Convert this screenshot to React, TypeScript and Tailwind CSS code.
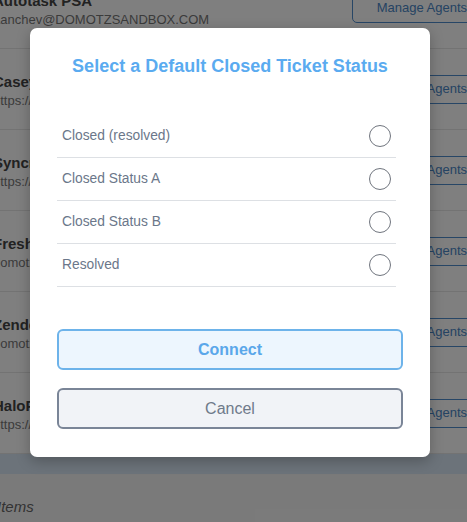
import React from 'react';

interface Integration {
  name: string;
  detail: string;
}

const integrations: Integration[] = [
  { name: 'Autotask PSA', detail: 'aanchev@DOMOTZSANDBOX.COM' },
  { name: 'Casey', detail: 'https://casey.example.com' },
  { name: 'Syncro', detail: 'https://domotz.syncromsp.com' },
  { name: 'Freshservice', detail: 'domotz.freshservice.com' },
  { name: 'Zendesk', detail: 'domotz.zendesk.com' },
  { name: 'HaloPSA', detail: 'https://domotz.halopsa.com' },
];

const statuses = ['Closed (resolved)', 'Closed Status A', 'Closed Status B', 'Resolved'];

const font = { fontFamily: '"Liberation Sans", Arial, sans-serif' };

export default function App() {
  return (
    <div className="relative h-[522px] w-[467px] overflow-hidden bg-white" style={font}>
      {/* Page behind the dialog */}
      <div className="-mt-[32px]">
        {integrations.map((item) => (
          <div
            key={item.name}
            className="flex h-[81px] items-center justify-between border-b border-[#e6e6e6]"
          >
            <div className="-ml-[7px] mt-[3px] flex flex-col gap-[2px]">
              <div className="text-[15px] font-bold leading-[18px] text-[#444]">{item.name}</div>
              <div className="text-[13px] leading-[16px] text-[#777]">{item.detail}</div>
            </div>
            <button className="-mr-[25px] h-[29px] rounded-[5px] border border-[#4f8ccc] px-[24px] text-[13px] text-[#4a86c6]">
              Manage Agents
            </button>
          </div>
        ))}
        <div className="h-[20px] bg-[#d8e6f4]" />
        <div className="h-[100px] bg-[#f5f5f5] pt-[22px]">
          <div className="-ml-[3px] text-[15px] italic text-[#666]">Items</div>
        </div>
      </div>

      {/* Dim overlay + dialog */}
      <div className="absolute inset-0 bg-black/50">
        <div className="ml-[30px] mt-[28px] flex w-[400px] flex-col rounded-[7px] bg-white px-[27px] pb-[28px] pt-[26px] shadow-[0_4px_14px_rgba(0,0,0,0.25)]">
          <h2 className="text-center text-[18px] font-bold leading-[24px] text-[#5aabf0]">
            Select a Default Closed Ticket Status
          </h2>
          <div className="mr-[7px] mt-[37px] flex flex-col">
            {statuses.map((s) => (
              <label
                key={s}
                className="flex h-[43px] items-center justify-between border-b border-[#dde0e4] pl-[5px] pr-[5px]"
              >
                <span className="text-[13.8px] text-[#6b778a]">{s}</span>
                <span className="h-[22px] w-[22px] rounded-full border border-[#70757e]" />
              </label>
            ))}
          </div>
          <button className="mt-[42px] h-[41px] rounded-[6px] border-2 border-[#6db3ea] bg-[#edf6fe] text-[16px] font-bold text-[#5aa7ea]">
            Connect
          </button>
          <button className="mt-[18px] h-[41px] rounded-[6px] border-2 border-[#7a8597] bg-[#f1f3f7] text-[16px] text-[#6f7a8a]">
            Cancel
          </button>
        </div>
      </div>
    </div>
  );
}
